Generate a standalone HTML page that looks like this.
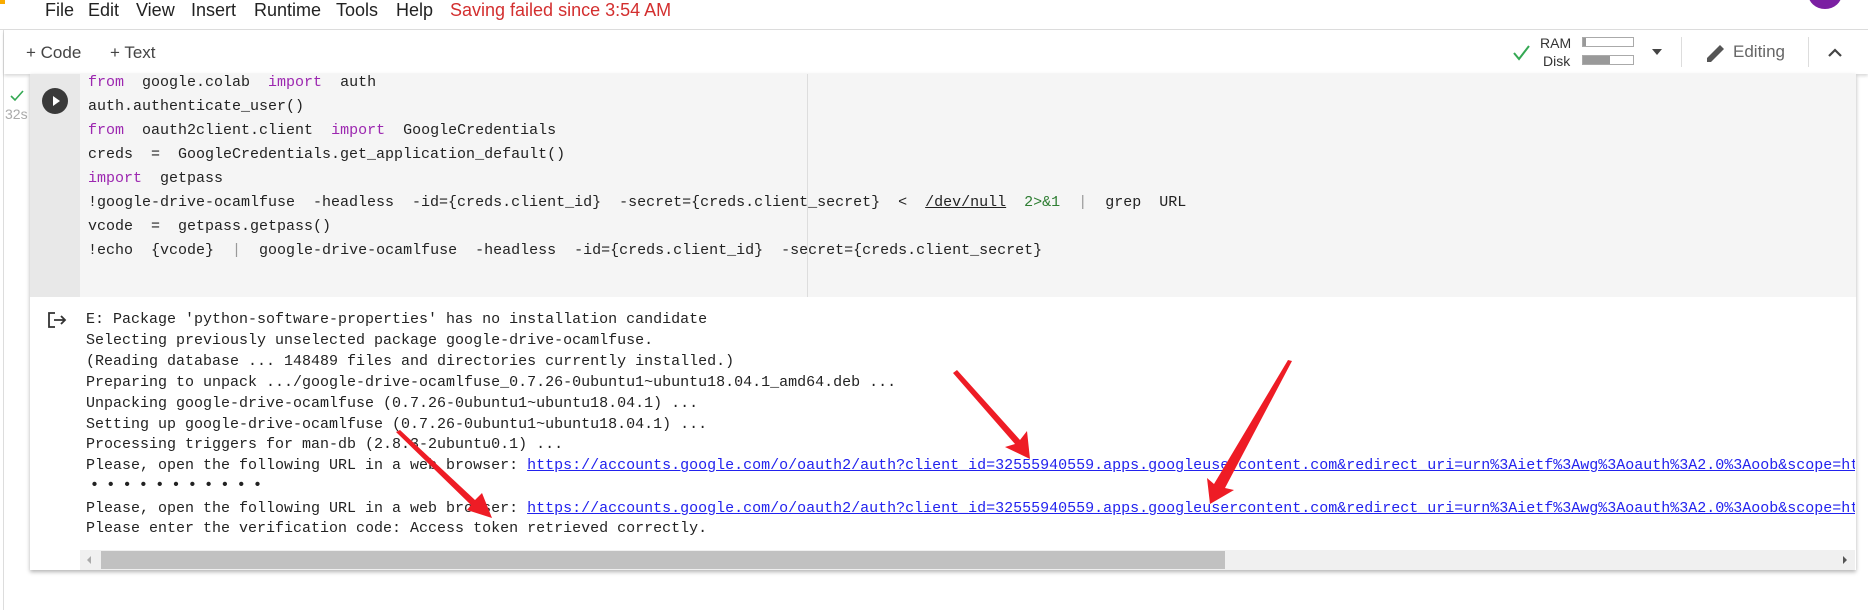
<!DOCTYPE html>
<html><head><meta charset="utf-8"><style>
*{margin:0;padding:0;box-sizing:border-box}
body{width:1868px;height:610px;overflow:hidden;background:#fff;position:relative;font-family:"Liberation Sans",sans-serif}
.abs{position:absolute}
.menu span{position:absolute;top:0;font-size:18px;line-height:20px;color:#222}
.mono{font-family:"Liberation Mono",monospace;font-size:15px;white-space:pre;color:#222}
.code div{position:absolute;left:88px;height:24px;line-height:24px}
.kw{color:#9c27b0}
.out div{position:absolute;left:86px;height:21px;line-height:21px}
a{color:#2222ee;text-decoration:underline}
</style></head><body>
<div class="abs" style="left:0;top:0;width:5px;height:4px;background:#f9ab00"></div>
<div class="menu">
<span style="left:45px">File</span><span style="left:88px">Edit</span><span style="left:136px">View</span><span style="left:191px">Insert</span><span style="left:254px">Runtime</span><span style="left:336px">Tools</span><span style="left:396px">Help</span><span style="left:450px;color:#d32f2f">Saving failed since 3:54 AM</span>
</div>
<div class="abs" style="left:1808px;top:-22px;width:34px;height:31px;border-radius:50%;background:#7b1fa2"></div>
<div class="abs" style="left:0;top:29px;width:1868px;height:1px;background:#ddd"></div>
<div class="abs" style="left:3px;top:30px;width:1px;height:580px;background:#ddd"></div>
<div class="abs" style="left:4px;top:30px;width:1864px;height:44px;background:#fff;box-shadow:0 2px 3px rgba(0,0,0,.15)"></div>
<div class="abs" style="left:26px;top:43px;font-size:17px;color:#444">+ Code</div>
<div class="abs" style="left:110px;top:43px;font-size:17px;color:#444">+ Text</div>
<svg class="abs" style="left:1512px;top:44px" width="20" height="18"><path d="M2 9l5 6L17 2" stroke="#34a853" stroke-width="2" fill="none"/></svg>
<div class="abs" style="left:1540px;top:34px;font-size:14px;color:#333;line-height:18px">RAM</div>
<div class="abs" style="left:1543px;top:52px;font-size:14px;color:#333;line-height:18px">Disk</div>
<div class="abs" style="left:1582px;top:37px;width:52px;height:10px;border:1px solid #aaa"><div style="width:3px;height:8px;background:#999"></div></div>
<div class="abs" style="left:1582px;top:55px;width:52px;height:10px;border:1px solid #aaa"><div style="width:27px;height:8px;background:#999"></div></div>
<svg class="abs" style="left:1651px;top:48px" width="12" height="8"><path d="M1 1h10L6 7z" fill="#444"/></svg>
<div class="abs" style="left:1681px;top:37px;width:1px;height:30px;background:#ddd"></div>
<svg class="abs" style="left:1705px;top:42px" width="22" height="22"><path d="M2 20v-4L15 3l4 4L6 20z" fill="#555"/></svg>
<div class="abs" style="left:1733px;top:42px;font-size:17px;color:#666">Editing</div>
<div class="abs" style="left:1808px;top:37px;width:1px;height:30px;background:#ddd"></div>
<svg class="abs" style="left:1827px;top:46px" width="16" height="12"><path d="M2 10l6-6 6 6" stroke="#444" stroke-width="2.2" fill="none"/></svg>
<svg class="abs" style="left:10px;top:90px" width="14" height="12"><path d="M1 6l4 4 8-9" stroke="#34a853" stroke-width="1.6" fill="none"/></svg>
<div class="abs" style="left:5px;top:106px;font-size:14px;color:#aaa">32s</div>
<div class="abs" style="left:30px;top:74px;width:1826px;height:496px;box-shadow:0 2px 4px rgba(0,0,0,.3);background:#fff"></div>
<div class="abs" style="left:30px;top:74px;width:1826px;height:223px;background:#f5f5f5"></div>
<div class="abs" style="left:30px;top:74px;width:50px;height:223px;background:#e8e8e8"></div>
<div class="abs" style="left:807px;top:74px;width:1px;height:223px;background:#ddd"></div>
<div class="abs" style="left:42px;top:88px;width:26px;height:26px;border-radius:50%;background:#3a3a3a"></div>
<svg class="abs" style="left:42px;top:88px" width="26" height="26"><path d="M11 8l7 5-7 5z" fill="#fff"/></svg>
<div class="code mono">
<div style="top:71px"><span class="kw">from</span>  google.colab  <span class="kw">import</span>  auth</div>
<div style="top:95px">auth.authenticate_user()</div>
<div style="top:119px"><span class="kw">from</span>  oauth2client.client  <span class="kw">import</span>  GoogleCredentials</div>
<div style="top:143px">creds  =  GoogleCredentials.get_application_default()</div>
<div style="top:167px"><span class="kw">import</span>  getpass</div>
<div style="top:191px">!google-drive-ocamlfuse  -headless  -id={creds.client_id}  -secret={creds.client_secret}  &lt;  <u>/dev/null</u>  <span style="color:#2e7d32">2&gt;&amp;1</span>  <span style="color:#999">|</span>  grep  URL</div>
<div style="top:215px">vcode  =  getpass.getpass()</div>
<div style="top:239px">!echo  {vcode}  <span style="color:#999">|</span>  google-drive-ocamlfuse  -headless  -id={creds.client_id}  -secret={creds.client_secret}</div>
</div>
<svg class="abs" style="left:46px;top:311px" width="22" height="18"><path d="M9 2H3v14h6M8 9h11M15 5l4 4-4 4" stroke="#333" stroke-width="1.8" fill="none"/></svg>
<div class="out mono" style="position:absolute;left:0;top:0;width:1855px;height:610px;overflow:hidden">
<div style="top:309px">E: Package 'python-software-properties' has no installation candidate</div>
<div style="top:330px">Selecting previously unselected package google-drive-ocamlfuse.</div>
<div style="top:351px">(Reading database ... 148489 files and directories currently installed.)</div>
<div style="top:372px">Preparing to unpack .../google-drive-ocamlfuse_0.7.26-0ubuntu1~ubuntu18.04.1_amd64.deb ...</div>
<div style="top:393px">Unpacking google-drive-ocamlfuse (0.7.26-0ubuntu1~ubuntu18.04.1) ...</div>
<div style="top:414px">Setting up google-drive-ocamlfuse (0.7.26-0ubuntu1~ubuntu18.04.1) ...</div>
<div style="top:434px">Processing triggers for man-db (2.8.3-2ubuntu0.1) ...</div>
<div style="top:455px">Please, open the following URL in a web browser: <a>https://accounts.google.com/o/oauth2/auth?client_id=32555940559.apps.googleusercontent.com&amp;redirect_uri=urn%3Aietf%3Awg%3Aoauth%3A2.0%3Aoob&amp;scope=https%3A%2F%2Fwww.googleapis.com</a></div>
<div style="top:475px;left:90px;letter-spacing:-0.85px;font-weight:bold">• • • • • • • • • • •</div>
<div style="top:498px">Please, open the following URL in a web browser: <a>https://accounts.google.com/o/oauth2/auth?client_id=32555940559.apps.googleusercontent.com&amp;redirect_uri=urn%3Aietf%3Awg%3Aoauth%3A2.0%3Aoob&amp;scope=https%3A%2F%2Fwww.googleapis.com</a></div>
<div style="top:518px">Please enter the verification code: Access token retrieved correctly.</div>
</div>
<div class="abs" style="left:80px;top:550px;width:1775px;height:20px;background:#f0f0f0"></div>
<div class="abs" style="left:101px;top:551px;width:1124px;height:18px;background:#c1c1c1"></div>
<svg class="abs" style="left:85px;top:554px" width="8" height="12"><path d="M6 2L2 6l4 4z" fill="#aaa"/></svg>
<svg class="abs" style="left:1841px;top:554px" width="8" height="12"><path d="M2 2l4 4-4 4z" fill="#555"/></svg>
<svg class="abs" style="left:0;top:0" width="1868" height="610">
<g fill="#ee1c25">
<path d="M953 373L957 370L1020 440L1027 431L1030 459L1005 447L1015 444Z"/>
<path d="M1288 360L1292 361L1225 488L1234 490L1210 504L1207 478L1214 484Z"/>
<path d="M396 432L400 430L475 500L482 493L492 518L467 510L471 505Z"/>
</g></svg>
</body></html>
